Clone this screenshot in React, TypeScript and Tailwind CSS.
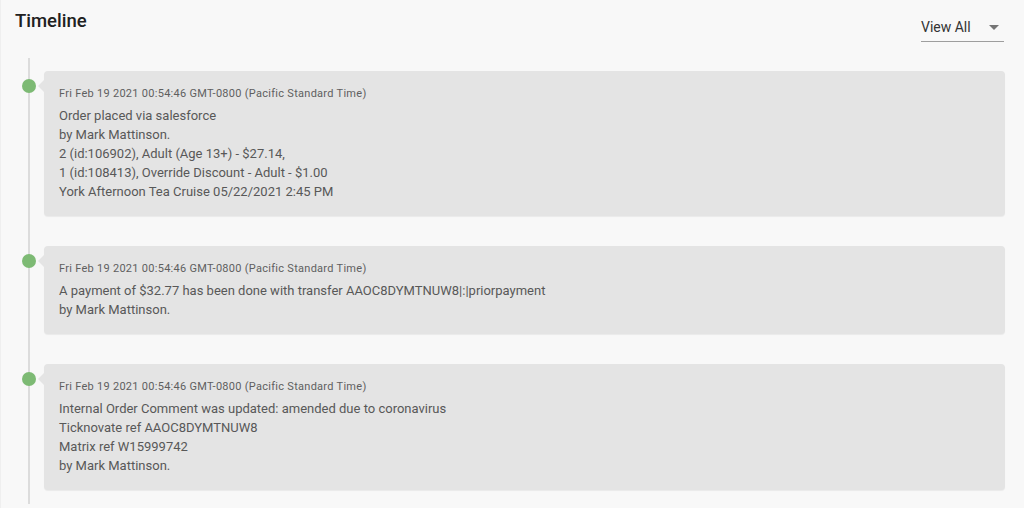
const events: { date: string; lines: string[] }[] = [
  {
    date: "Fri Feb 19 2021 00:54:46 GMT-0800 (Pacific Standard Time)",
    lines: [
      "Order placed via salesforce",
      "by Mark Mattinson.",
      "2 (id:106902), Adult (Age 13+) - $27.14,",
      "1 (id:108413), Override Discount - Adult - $1.00",
      "York Afternoon Tea Cruise 05/22/2021 2:45 PM",
    ],
  },
  {
    date: "Fri Feb 19 2021 00:54:46 GMT-0800 (Pacific Standard Time)",
    lines: [
      "A payment of $32.77 has been done with transfer AAOC8DYMTNUW8|:|priorpayment",
      "by Mark Mattinson.",
    ],
  },
  {
    date: "Fri Feb 19 2021 00:54:46 GMT-0800 (Pacific Standard Time)",
    lines: [
      "Internal Order Comment was updated: amended due to coronavirus",
      "Ticknovate ref AAOC8DYMTNUW8",
      "Matrix ref W15999742",
      "by Mark Mattinson.",
    ],
  },
];

function TimelineItem({ date, lines }: { date: string; lines: string[] }) {
  return (
    <div className="relative flex">
      {/* dot */}
      <div className="absolute left-[-22px] top-[8px] h-[14px] w-[14px] rounded-full bg-[#7dba74]" />
      <div className="relative flex-1 rounded-[4px] bg-[#e4e4e4] px-[15px] pt-[15px] pb-[15px] shadow-[0_1px_1px_rgba(0,0,0,0.06)]">
        {/* arrow */}
        <div className="absolute left-[-6px] top-[9px] h-0 w-0 border-y-[6px] border-r-[6px] border-y-transparent border-r-[#e4e4e4]" />
        <div className="text-[11px] leading-[16px] tracking-[0.28px] text-[#5f5f5f]">
          {date}
        </div>
        <div className="mt-[4px] text-[13px] leading-[19px] text-[#585858]">
          {lines.map((l, i) => (
            <div key={i}>{l}</div>
          ))}
        </div>
      </div>
    </div>
  );
}

export default function App() {
  return (
    <div
      className="h-[508px] w-[1024px] overflow-hidden border-l border-[#efefef] bg-[#f8f8f8]"
      style={{ fontFamily: "Roboto, 'Liberation Sans', sans-serif" }}
    >
      <div className="flex items-start justify-between pl-[14px] pr-[20px] pt-[9px]">
        <h2 className="text-[18.5px] font-medium leading-[24px] text-[#212121]">
          Timeline
        </h2>
        <div className="mt-[9px] flex w-[83px] items-center justify-between border-b border-[#9e9e9e] pb-[5px] text-[14px] leading-[18px] text-[#333]">
          <span>View All</span>
          <span className="mr-[5px] h-0 w-0 border-x-[5px] border-t-[5px] border-x-transparent border-t-[#757575]" />
        </div>
      </div>

      <div className="relative ml-[27px] mt-[16px] border-l-2 border-[#dcdcdc] pb-[14px] pl-[14px] pr-[19px] pt-[13px]">
        <div className="flex flex-col gap-[30px]">
          {events.map((e, i) => (
            <TimelineItem key={i} date={e.date} lines={e.lines} />
          ))}
        </div>
      </div>
    </div>
  );
}
